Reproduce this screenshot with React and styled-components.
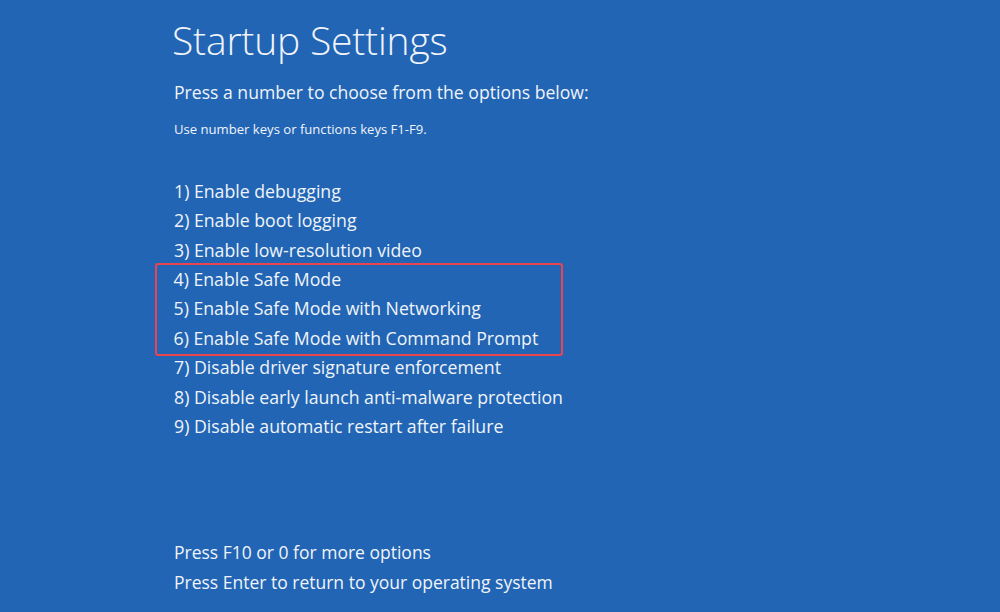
import styled, { createGlobalStyle } from "styled-components";

const Global = createGlobalStyle`
  html, body { margin: 0; padding: 0; }
  body {
    background: #2265b4;
    font-family: "Open Sans", "Noto Sans", sans-serif;
    color: #f0f4fa;
  }
`;

const Screen = styled.div`
  width: 1000px;
  height: 612px;
  overflow: hidden;
  background: #2265b4;
  display: flex;
  flex-direction: column;
  padding-left: 172px;
  box-sizing: border-box;
`;

const Title = styled.h1`
  margin: 14px 0 0 0;
  font-size: 39px;
  font-weight: 300;
  line-height: 52px;
  letter-spacing: -0.2px;
`;

const Lead = styled.p`
  margin: 14px 0 0 2px;
  font-size: 17.6px;
  line-height: 24px;
`;

const Hint = styled.p`
  margin: 17px 0 0 2px;
  font-size: 13.1px;
  line-height: 16px;
`;

const List = styled.div`
  margin-top: 40px;
  display: flex;
  flex-direction: column;
`;

const Group = styled.div`
  margin: -2.5px 0 -2.5px -17px;
  padding: 0 0 1px 14.5px;
  width: 389px;
  border: 2.5px solid #ea4450;
  border-radius: 3px;
`;

const Item = styled.div`
  font-size: 17.7px;
  line-height: 29.4px;
  margin-left: 2px;
  white-space: nowrap;
`;

const Footer = styled.div`
  margin-top: auto;
  margin-bottom: 15px;
  display: flex;
  flex-direction: column;
`;

const FootLine = styled.div`
  font-size: 17.5px;
  line-height: 29.4px;
  margin-left: 2px;
`;

const options = [
  "Enable debugging",
  "Enable boot logging",
  "Enable low-resolution video",
  "Enable Safe Mode",
  "Enable Safe Mode with Networking",
  "Enable Safe Mode with Command Prompt",
  "Disable driver signature enforcement",
  "Disable early launch anti-malware protection",
  "Disable automatic restart after failure",
];

const row = (i) => <Item key={i}>{i + 1}) {options[i]}</Item>;

export default function App() {
  return (
    <>
      <Global />
      <Screen>
        <Title>Startup Settings</Title>
        <Lead>Press a number to choose from the options below:</Lead>
        <Hint>Use number keys or functions keys F1-F9.</Hint>
        <List>
          {[0, 1, 2].map(row)}
          <Group>{[3, 4, 5].map(row)}</Group>
          {[6, 7, 8].map(row)}
        </List>
        <Footer>
          <FootLine>Press F10 or 0 for more options</FootLine>
          <FootLine>Press Enter to return to your operating system</FootLine>
        </Footer>
      </Screen>
    </>
  );
}
